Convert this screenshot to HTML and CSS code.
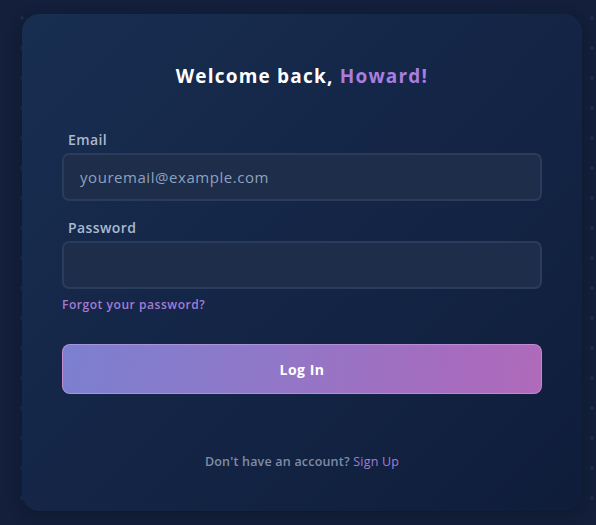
FILE: index.html
```html
<!DOCTYPE html>
<html>
<head>
<meta charset="utf-8">
<link rel="stylesheet" href="styles.css">
</head>
<body>
<div class="page">
  <div class="card">
    <h1 class="title">Welcome back, <span class="accent">Howard!</span></h1>
    <form class="form">
      <div class="field">
        <label class="label">Email</label>
        <input class="input" type="text" placeholder="youremail@example.com">
      </div>
      <div class="field">
        <label class="label">Password</label>
        <input class="input" type="password">
      </div>
      <a class="forgot" href="#">Forgot your password?</a>
      <button class="btn" type="button">Log In</button>
    </form>
    <p class="footer">Don't have an account? <a class="signup" href="#">Sign Up</a></p>
  </div>
</div>
</body>
</html>
```
FILE: styles.css
```css
html, body {
  margin: 0;
  padding: 0;
}
body {
  width: 596px;
  height: 525px;
  overflow: hidden;
  background-color: #131f3b;
  background-image: radial-gradient(circle, rgba(120,140,190,0.12) 1.5px, transparent 2px);
  background-size: 30px 30px;
  background-position: 7px 3px;
  font-family: "Open Sans", "Liberation Sans", sans-serif;
}
.page {
  padding: 14px 14px 0 22px;
}
.card {
  box-sizing: border-box;
  width: 560px;
  height: 497px;
  border-radius: 18px;
  background: linear-gradient(135deg, #182e51 0%, #142546 50%, #0f1d3a 100%);
  padding: 49px 40px 0 40px;
  display: flex;
  flex-direction: column;
  box-shadow: 0 4px 16px rgba(0,0,0,0.25);
}
.title {
  margin: 0;
  text-align: center;
  color: #ffffff;
  font-size: 19px;
  font-weight: 700;
  line-height: 26px;
  letter-spacing: 1.2px;
}
.accent {
  color: #a87edf;
}
.form {
  margin-top: 42px;
  display: flex;
  flex-direction: column;
}
.field {
  display: flex;
  flex-direction: column;
  margin-bottom: 18px;
}
.label {
  color: #aab9d0;
  font-size: 14px;
  font-weight: 600;
  line-height: 18px;
  padding-left: 6px;
  margin-bottom: 4px;
  letter-spacing: 0.4px;
}
.input {
  box-sizing: border-box;
  height: 48px;
  width: 480px;
  border: 2px solid #2b3c5a;
  border-radius: 7px;
  background: #1d2d4a;
  padding: 0 16px;
  font-family: inherit;
  font-size: 15px;
  letter-spacing: 0.55px;
  color: #c8d4e6;
  outline: none;
}
.input::placeholder {
  color: #8ea2bf;
}
.forgot {
  margin-top: -10px;
  color: #a47bd6;
  font-size: 12px;
  font-weight: 600;
  letter-spacing: 0.55px;
  text-decoration: none;
  line-height: 16px;
  align-self: flex-start;
}
.btn {
  margin-top: 31px;
  box-sizing: border-box;
  height: 50px;
  width: 480px;
  border: 1px solid rgba(210,180,240,0.45);
  border-radius: 8px;
  background: linear-gradient(100deg, #7c7fd0 0%, #8f78c8 40%, #a56cbf 80%, #b06ab9 100%);
  color: #ffffff;
  font-family: inherit;
  font-size: 14px;
  font-weight: 700;
  letter-spacing: 0.5px;
  cursor: pointer;
}
.footer {
  margin: 59px 0 0 0;
  text-align: center;
  color: #7f8ca7;
  font-size: 12.5px;
  font-weight: 600;
  letter-spacing: 0.2px;
}
.signup {
  color: #a77bd6;
  font-weight: 500;
  text-decoration: none;
}
```
